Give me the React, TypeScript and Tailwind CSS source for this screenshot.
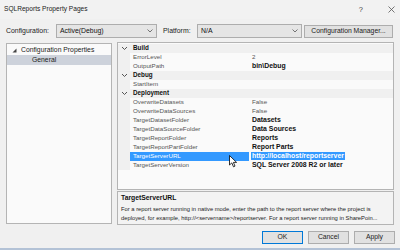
import React from "react";

type Row =
  | { kind: "cat"; name: string }
  | { kind: "prop"; name: string; value: string; bold?: boolean; sel?: boolean };

const rows: Row[] = [
  { kind: "cat", name: "Build" },
  { kind: "prop", name: "ErrorLevel", value: "2" },
  { kind: "prop", name: "OutputPath", value: "bin\\Debug", bold: true },
  { kind: "cat", name: "Debug" },
  { kind: "prop", name: "StartItem", value: "" },
  { kind: "cat", name: "Deployment" },
  { kind: "prop", name: "OverwriteDatasets", value: "False" },
  { kind: "prop", name: "OverwriteDataSources", value: "False" },
  { kind: "prop", name: "TargetDatasetFolder", value: "Datasets", bold: true },
  { kind: "prop", name: "TargetDataSourceFolder", value: "Data Sources", bold: true },
  { kind: "prop", name: "TargetReportFolder", value: "Reports", bold: true },
  { kind: "prop", name: "TargetReportPartFolder", value: "Report Parts", bold: true },
  { kind: "prop", name: "TargetServerURL", value: "http://localhost/reportserver", bold: true, sel: true },
  { kind: "prop", name: "TargetServerVersion", value: "SQL Server 2008 R2 or later", bold: true },
];

function Chevron() {
  return (
    <svg width="7" height="5" viewBox="0 0 7 5" className="block">
      <polyline points="1,1 3.5,3.5 6,1" fill="none" stroke="#555" strokeWidth="1" />
    </svg>
  );
}

function Dropdown({ text, w }: { text: string; w: string }) {
  return (
    <div className={`${w} h-[14px] border border-[#adadad] bg-[#e5e5e5] flex items-center justify-between pl-[3px] pr-[3px]`}>
      <span className="text-[6.9px] text-[#111]">{text}</span>
      <svg width="6" height="4" viewBox="0 0 6 4">
        <polyline points="0.5,0.5 3,3 5.5,0.5" fill="none" stroke="#666" strokeWidth="0.9" />
      </svg>
    </div>
  );
}

export default function App() {
  return (
    <div className="w-[400px] h-[250px] bg-[#f0f0f0] relative overflow-hidden font-['Liberation_Sans',Arial,sans-serif] text-[#111] leading-none">
      {/* Title bar */}
      <div className="h-[19px] flex items-center pl-[4px] pr-[5px] bg-[#f2f2f2]">
        <span className="text-[6.6px] text-[#222]">SQLReports Property Pages</span>
        <div className="ml-auto flex items-center gap-[25px] text-[#444]">
          <span className="text-[7.5px]">?</span>
          <svg width="7" height="7" viewBox="0 0 7 7">
            <path d="M0.5 0.5 L6.5 6.5 M6.5 0.5 L0.5 6.5" stroke="#555" strokeWidth="0.8" />
          </svg>
        </div>
      </div>

      {/* Configuration row */}
      <div className="mt-[5px] h-[14px] flex items-center pl-[6px]">
        <span className="text-[6.9px] w-[50px] text-[#222]">Configuration:</span>
        <Dropdown text="Active(Debug)" w="w-[101px]" />
        <span className="text-[6.9px] ml-[6px] w-[34px] text-[#222]">Platform:</span>
        <Dropdown text="N/A" w="w-[105px]" />
        <div className="ml-[2px] w-[89px] h-[13px] border border-[#adadad] bg-[#e1e1e1] flex items-center justify-center text-[6.8px] text-[#222]">
          Configuration Manager...
        </div>
      </div>

      {/* Main area */}
      <div className="mt-[4px] flex pl-[6px]">
        {/* Tree */}
        <div className="w-[106px] h-[181px] mt-[1px] border border-[#b4b4b4] bg-[#fafafa] pt-[1px]">
          <div className="h-[10px] flex items-center pl-[5px]">
            <svg width="5" height="5" viewBox="0 0 5 5" className="mr-[4px]">
              <polygon points="4.5,0.5 4.5,4.5 0.5,4.5" fill="#444" />
            </svg>
            <span className="text-[6.8px] text-[#222]">Configuration Properties</span>
          </div>
          <div className="h-[10px] flex items-center pl-[25px] bg-[#cdd2db]">
            <span className="text-[6.8px] text-[#222]">General</span>
          </div>
        </div>

        {/* Right column */}
        <div className="ml-[5px] w-[277px] flex flex-col">
          <div className="h-[148px] border border-[#b4b4b4] bg-[#fafafa] pt-[0.5px] relative">
            {rows.map((r, i) => (
              <div
                key={i}
                className={`h-[9px] flex items-center ${r.kind === "cat" ? "bg-[#f0f0f0]" : ""}`}
              >
                <div className="w-[12px] h-full bg-[#f0f0f0] flex items-center justify-center">
                  {r.kind === "cat" ? <Chevron /> : null}
                </div>
                {r.kind === "cat" ? (
                  <span className="pl-[3px] text-[6.3px] font-bold text-[#111]">{r.name}</span>
                ) : (
                  <>
                    <div
                      className={`w-[119px] h-full flex items-center pl-[3px] ${
                        r.sel ? "bg-[#3399ff] text-white" : "text-[#555]"
                      }`}
                    >
                      <span className="text-[6.2px]">{r.name}</span>
                    </div>
                    <div className="pl-[3px] h-full flex items-center">
                      <span
                        className={`${r.bold ? "font-bold text-[6.9px]" : "text-[6.2px]"} ${
                          r.sel ? "bg-[#3399ff] text-white px-[1px] -ml-[1px] h-[8px] flex items-center" : r.bold ? "text-[#111]" : "text-[#555]"
                        }`}
                      >
                        {r.value}
                      </span>
                    </div>
                  </>
                )}
              </div>
            ))}
            {/* mouse pointer */}
            <svg
              width="9"
              height="13"
              viewBox="0 0 9 13"
              className="absolute left-[111px] top-[112px]"
            >
              <path
                d="M0.5 0.5 L0.5 10 L2.8 7.9 L4.5 11.8 L6 11.1 L4.4 7.4 L7.6 7.4 Z"
                fill="#fff"
                stroke="#000"
                strokeWidth="0.8"
                strokeLinejoin="round"
              />
            </svg>
          </div>
          <div className="mt-[1px] h-[34px] border border-[#b4b4b4] bg-[#f3f3f3] pl-[3px] pt-[3px]">
            <div className="text-[6.8px] font-bold text-[#111] h-[9px]">TargetServerURL</div>
            <div className="text-[5.8px] text-[#222] leading-[9px] mt-[1px] whitespace-nowrap">
              For a report server running in native mode, enter the path to the report server where the project is
            </div>
            <div className="text-[5.8px] text-[#222] leading-[9px] whitespace-nowrap">
              deployed, for example, http://&lt;servername&gt;/reportserver. For a report server running in SharePoin...
            </div>
          </div>
        </div>
      </div>

      {/* Buttons */}
      <div className="mt-[6px] flex justify-end pr-[5px] gap-[5px]">
        <div className="w-[41px] h-[13px] border border-[#0078d7] bg-[#e1e1e1] flex items-center justify-center text-[6.8px] text-[#222]">
          OK
        </div>
        <div className="w-[41px] h-[13px] border border-[#adadad] bg-[#e1e1e1] flex items-center justify-center text-[6.8px] text-[#222]">
          Cancel
        </div>
        <div className="w-[41px] h-[13px] border border-[#adadad] bg-[#e1e1e1] flex items-center justify-center text-[6.8px] text-[#222]">
          Apply
        </div>
      </div>

      <div className="absolute left-0 right-0 bottom-0 h-[2px] bg-[#b3c2d6]" />
    </div>
  );
}
